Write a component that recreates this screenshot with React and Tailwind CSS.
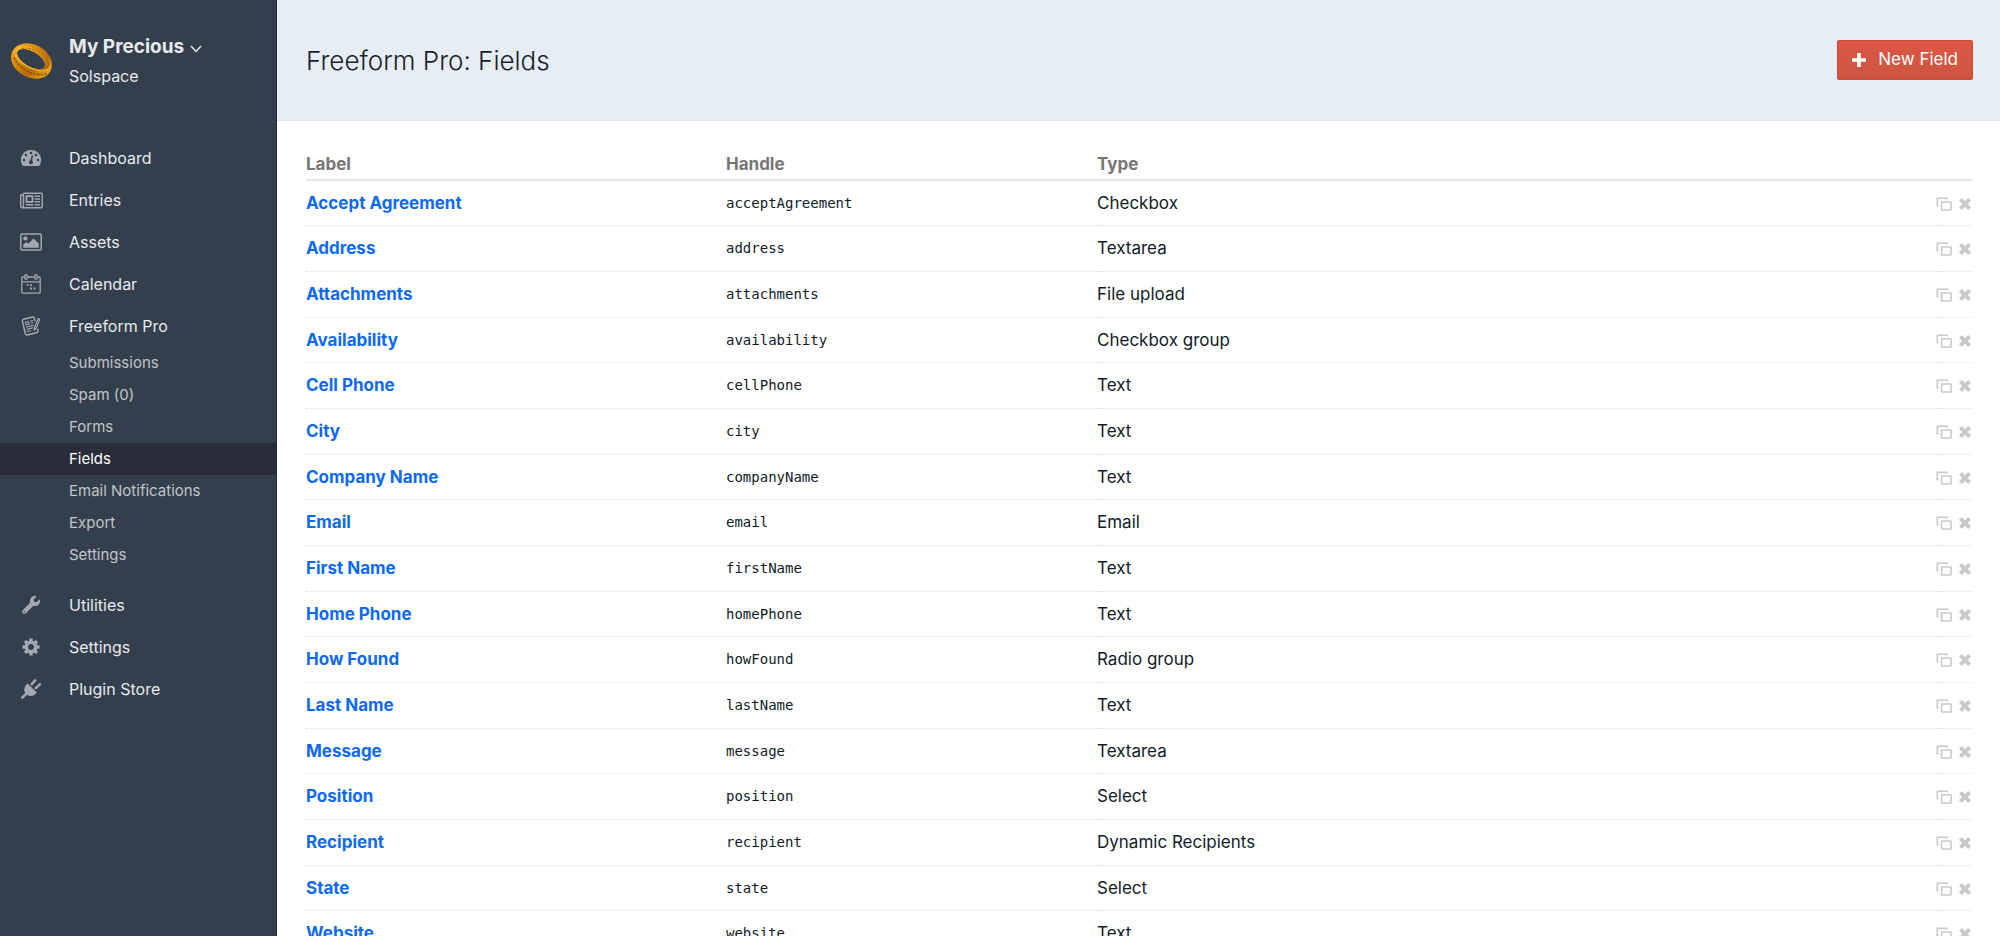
import { FaWrench } from 'react-icons/fa';

const DashboardIcon = () => (
  <svg viewBox="0 0 20 16" className="h-4 w-5" fill="currentColor" aria-hidden="true">
    <path
      fillRule="evenodd"
      d="M10 0a10 10 0 0 1 8.6 15.2c-.3.5-.7.8-1.200.8H2.600c-.5 0-.9-.3-1.200-.8A10 10 0 0 1 10 0zM10 1.700a1.300 1.300 0 1 0 0 2.600 1.300 1.300 0 0 0 0-2.600zM5 3.700a1.300 1.300 0 1 0 0 2.600 1.300 1.300 0 0 0 0-2.600zM15 3.700a1.300 1.300 0 1 0 0 2.600 1.300 1.300 0 0 0 0-2.600zM3 8.700a1.300 1.300 0 1 0 0 2.600 1.300 1.300 0 0 0 0-2.600zM17 8.700a1.300 1.300 0 1 0 0 2.600 1.300 1.300 0 0 0 0-2.600zM10.600 5.500l-1 4.800a2 2 0 1 0 1.500.3l1.100-4.800z"
    />
  </svg>
);

const EntriesIcon = () => (
  <svg viewBox="0 0 23 17" className="h-[17px] w-[23px]" fill="none" stroke="currentColor" strokeWidth="1.4" aria-hidden="true">
    <path d="M3.500 1.200h17.800c.5 0 .9.4.9.9v12.800c0 .5-.4.9-.9.9H2.500c-1 0-1.800-.8-1.800-1.800V3h2.800" />
    <path d="M3.500 1.200V14c0 1-.4 1.700-1.200 1.800" />
    <path d="M6.500 4.200h6v5.600h-6z" strokeWidth="1.800" />
    <path d="M14.500 4.200h5.500M14.500 7h5.500M14.500 9.800h5.500M5.800 12.700h7.500M14.500 12.700h5.500" />
  </svg>
);

const AssetsIcon = () => (
  <svg viewBox="0 0 22 18" className="h-[18px] w-[22px]" fill="none" aria-hidden="true">
    <rect x="0.800" y="1" width="20.400" height="16" rx="1.300" stroke="currentColor" strokeWidth="1.500" />
    <circle cx="5.400" cy="5.400" r="2.100" fill="currentColor" />
    <path d="M3.200 14.800v-3l3-2.800 2.200 1.800 5-5.200 5.400 4.800v4.400z" fill="currentColor" />
  </svg>
);

const CalendarIcon = () => (
  <svg viewBox="0 0 20 20" className="size-5" fill="none" stroke="currentColor" strokeWidth="1.300" aria-hidden="true">
    <path d="M3.500 3H2A1.200 1.200 0 0 0 .8 4.200v13.800c0 .7.500 1.200 1.200 1.200h16c.7 0 1.200-.5 1.200-1.200V4.200C19.200 3.500 18.700 3 18 3h-1.500M6.500 3h7M.8 7.800h18.400" />
    <rect x="3.800" y="0.700" width="2.400" height="4.400" rx="1.200" />
    <rect x="13.800" y="0.700" width="2.400" height="4.400" rx="1.200" />
    <path d="M5.700 10.200h1.900v1.900H5.700zM9 10.200h1.900v1.900H9zM9 13.600h1.900v1.900H9zM12.500 13.600h1.900v1.900h-1.900z" fill="currentColor" stroke="none" />
  </svg>
);

const FreeformIcon = () => (
  <svg viewBox="0 0 20 20" className="size-5" fill="none" stroke="currentColor" strokeLinecap="round" strokeLinejoin="round" aria-hidden="true">
    <path d="M14 4.500l-.7-2.300c-.3-.9-1-1.300-1.900-1.100L2.700 3.200c-1 .3-1.500 1-1.300 2l2.900 12.300c.3 1 1 1.600 2 1.400l9-2.200c1-.2 1.700-.9 1.700-2v-1.500" strokeWidth="1.500" />
    <path d="M4.400 6.200l3-.7.600 2.600-3 .7zM9.500 5l2-.5M10 7l2-.5M5.500 11l6.500-1.600M6 13.300l5.500-1.400M6.500 15.500l3-.8" strokeWidth="1.100" />
    <path d="M17.300 2.500c1 0 1.500.5 1.300 1.300L15.300 12l-2 2.200.2-3z" strokeWidth="1.200" />
  </svg>
);

const GearIcon = () => (
  <svg viewBox="0 0 18 18" className="size-[18px]" fill="none" stroke="currentColor" aria-hidden="true">
    <circle cx="9" cy="9" r="4.700" strokeWidth="3.600" />
    <path
      d="M9 .5v3M9 14.500v3M.5 9h3M14.500 9h3M3 3l2.100 2.100M12.900 12.900L15 15M3 15l2.100-2.100M12.900 5.100L15 3"
      strokeWidth="3.400"
    />
  </svg>
);

const PlugIcon = () => (
  <svg viewBox="0 0 20 20" className="size-5" fill="none" stroke="currentColor" strokeLinecap="round" aria-hidden="true">
    <path d="M1.300 18.700L5.500 14.500M10.800 5.200l3.400-3.800M14.800 9.200l4-3.800" strokeWidth="2.500" />
    <path d="M6.600 4.400l9.200 9c-2.400 3.500-6.400 4.600-9.600 2.600-.9-.5-1.600-1.300-2.100-2.200-1.700-3.200-.8-7 2.500-9.400z" fill="currentColor" stroke="none" />
  </svg>
);

const RingLogo = () => (
  <svg viewBox="0 0 42 38" className="h-[38px] w-[42px]" fill="none" aria-hidden="true">
    <defs>
      <linearGradient id="ringBand" x1="0" y1="0" x2="1" y2="1">
        <stop offset="0" stopColor="#f3ad25" />
        <stop offset="0.350" stopColor="#d98a0c" />
        <stop offset="0.650" stopColor="#b56c05" />
        <stop offset="0.850" stopColor="#e09c1a" />
        <stop offset="1" stopColor="#f4b52c" />
      </linearGradient>
      <linearGradient id="ringInner" x1="0" y1="0" x2="1" y2="1">
        <stop offset="0" stopColor="#f9bd38" />
        <stop offset="0.500" stopColor="#d8921b" />
        <stop offset="1" stopColor="#a05f08" />
      </linearGradient>
    </defs>
    <path
      fill="url(#ringBand)"
      fillRule="evenodd"
      d="M1.500 8.900A21.500 16.500 28 1 1 39.500 29.100A21.500 16.500 28 1 1 1.500 8.900zM6.600 9.200A15.500 7.500 30 1 0 33.400 24.800A15.500 7.500 30 1 0 6.600 9.200z"
    />
    <path
      fill="url(#ringInner)"
      fillRule="evenodd"
      d="M4.500 6.500A20 11.500 30 0 1 38.500 26.500A20 11.500 30 0 1 4.500 6.500zM6.600 9.200A15.500 7.500 30 1 0 33.400 24.800A15.500 7.500 30 1 0 6.600 9.200z"
    />
    <path d="M3 15.500c2.500 6.500 9.500 12.300 17.500 15.500 6.500 2.400 12.500 2.500 16 0" stroke="#8a4b03" strokeWidth="1.400" strokeDasharray="2.500 1.200" />
    <path d="M3 8.500C3.500 15.500 11.500 22.500 20.500 26.500c8 3.300 16 3.200 18.500-2" stroke="#f7b935" strokeWidth="1.200" />
    <path d="M11 6.500c7-1.300 15 1.500 21 7 3 2.700 5 5.500 5.500 8.500" stroke="#a66208" strokeWidth="1" strokeDasharray="2 1.500" />
  </svg>
);

const PlusIcon = () => (
  <svg viewBox="0 0 14 14" className="size-3.5" fill="none" stroke="currentColor" strokeWidth="3.600" aria-hidden="true">
    <path d="M7 0v14M0 7h14" />
  </svg>
);

const CopyIcon = () => (
  <svg viewBox="0 0 16 14" className="h-3.5 w-4" fill="none" stroke="currentColor" strokeWidth="1.600" aria-hidden="true">
    <path d="M2.500 8.800H1.300V1.300h9.700v1.200" />
    <rect x="5.600" y="5" width="9.400" height="8" rx="0.400" />
  </svg>
);

const DeleteIcon = () => (
  <svg viewBox="0 0 12 12" className="size-3" fill="none" stroke="currentColor" strokeWidth="4" aria-hidden="true">
    <path d="M1.400 1.400l9.200 9.200M10.600 1.400l-9.200 9.200" />
  </svg>
);

const subnav = ['Submissions', 'Spam (0)', 'Forms', 'Fields', 'Email Notifications', 'Export', 'Settings'];

const nav = [
  { name: 'Dashboard', icon: DashboardIcon },
  { name: 'Entries', icon: EntriesIcon },
  { name: 'Assets', icon: AssetsIcon },
  { name: 'Calendar', icon: CalendarIcon },
  { name: 'Freeform Pro', icon: FreeformIcon, children: subnav },
  { name: 'Utilities', icon: () => <FaWrench className="size-[18px]" aria-hidden="true" /> },
  { name: 'Settings', icon: GearIcon },
  { name: 'Plugin Store', icon: PlugIcon },
];

const fields = [
  ['Accept Agreement', 'acceptAgreement', 'Checkbox'],
  ['Address', 'address', 'Textarea'],
  ['Attachments', 'attachments', 'File upload'],
  ['Availability', 'availability', 'Checkbox group'],
  ['Cell Phone', 'cellPhone', 'Text'],
  ['City', 'city', 'Text'],
  ['Company Name', 'companyName', 'Text'],
  ['Email', 'email', 'Email'],
  ['First Name', 'firstName', 'Text'],
  ['Home Phone', 'homePhone', 'Text'],
  ['How Found', 'howFound', 'Radio group'],
  ['Last Name', 'lastName', 'Text'],
  ['Message', 'message', 'Textarea'],
  ['Position', 'position', 'Select'],
  ['Recipient', 'recipient', 'Dynamic Recipients'],
  ['State', 'state', 'Select'],
  ['Website', 'website', 'Text'],
];

const Sidebar = () => (
  <aside className="w-[277px] shrink-0 border-r border-[#1b2a3f] bg-[#333f4d] text-[#e8eaec]">
    <div className="flex h-[137px] items-start gap-4 pl-[11px] pt-8">
      <div className="mt-2.5">
        <RingLogo />
      </div>
      <div>
        <button type="button" className="flex h-[30px] items-center gap-1.5 text-[19px] font-bold">
          My Precious
          <svg viewBox="0 0 12 8" className="mt-1 h-2 w-3" fill="none" stroke="currentColor" strokeWidth="1.500" aria-hidden="true">
            <path d="M1 1l5 5.500L11 1" />
          </svg>
        </button>
        <p className="text-base leading-[28px]">Solspace</p>
      </div>
    </div>

    <nav>
      <ul>
        {nav.map(({ name, icon: Icon, children }) => (
          <li key={name}>
            <a href="#" className="flex h-[42px] items-center text-base">
              <span className="flex w-[69px] shrink-0 items-center pl-[19px] text-[#a3a9b0]">
                <span className="flex w-6 justify-center">
                  <Icon />
                </span>
              </span>
              {name}
            </a>
            {children && (
              <ul className="mb-[13px]">
                {children.map((child) => (
                  <li key={child}>
                    <a
                      href="#"
                      className={
                        child === 'Fields'
                          ? 'flex h-8 items-center bg-[#282d39] pl-[69px] text-[15px] text-white'
                          : 'flex h-8 items-center pl-[69px] text-[15px] text-[#c1c5c9]'
                      }
                    >
                      {child}
                    </a>
                  </li>
                ))}
              </ul>
            )}
          </li>
        ))}
      </ul>
    </nav>
  </aside>
);

const FieldsTable = () => (
  <table className="w-full table-fixed border-collapse text-left text-[17px] leading-6 text-[#101b28]">
    <thead>
      <tr className="h-[34px] border-b-2 border-[#e8e8e8] text-[#767676]">
        <th className="w-[420px] p-0 pt-0.5 font-bold">Label</th>
        <th className="w-[371px] p-0 pt-0.5 font-bold">Handle</th>
        <th className="p-0 pt-0.5 font-bold">Type</th>
        <th className="w-9 p-0" aria-label="Actions" />
      </tr>
    </thead>
    <tbody>
      {fields.map(([label, handle, type]) => (
        <tr key={handle} className="h-[46px] border-b border-dotted border-[#dcdcdc] nth-[3n+1]:h-[45px]">
          <td className="p-0">
            <a href="#" className="font-bold text-[#0d69f2]">{label}</a>
          </td>
          <td className="p-0 font-['DejaVu_Sans_Mono',monospace] text-sm">{handle}</td>
          <td className="p-0">{type}</td>
          <td className="p-0 pt-0.5">
            <div className="flex items-center gap-[7px] text-[#c9c9c9]">
              <button type="button" aria-label={`Duplicate ${label}`}>
                <CopyIcon />
              </button>
              <button type="button" aria-label={`Delete ${label}`}>
                <DeleteIcon />
              </button>
            </div>
          </td>
        </tr>
      ))}
    </tbody>
  </table>
);

const App = () => {
  return (
    <div className="flex h-screen overflow-hidden bg-white font-['Inter',sans-serif]">
      <Sidebar />

      <main className="min-w-0 flex-1">
        <header className="flex h-[121px] items-start justify-between border-b border-[#dde2e7] bg-[#e6edf4] pl-[29px] pr-[27px] pt-10">
          <h1 className="text-[26px] font-light leading-[42px] text-[#16212e]">Freeform Pro: Fields</h1>
          <button
            type="button"
            className="flex h-10 items-center gap-3 rounded-xs border border-[#cf4a30] bg-linear-to-b from-[#dc5845] to-[#cb5541] px-3.5 text-[17px] text-white"
          >
            <PlusIcon />
            New Field
          </button>
        </header>

        <div className="pl-[29px] pr-7 pt-[25px]">
          <FieldsTable />
        </div>
      </main>
    </div>
  );
};

export default App;
